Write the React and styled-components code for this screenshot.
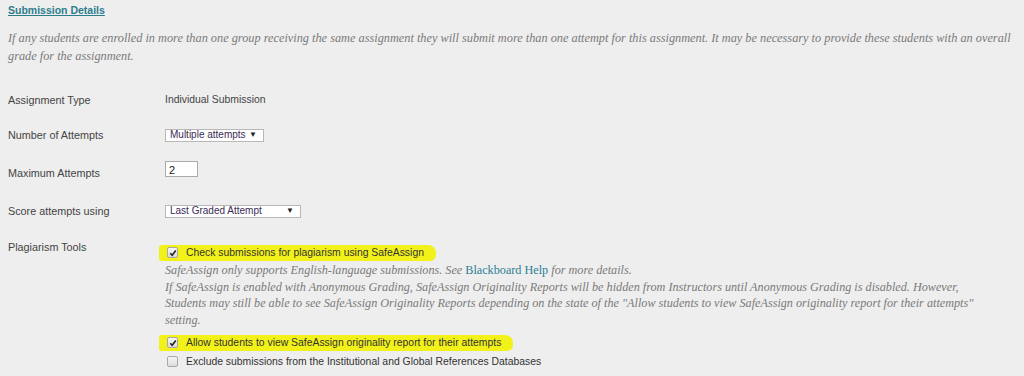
import React from 'react'
import styled, { createGlobalStyle } from 'styled-components'

const GlobalStyle = createGlobalStyle`
  html, body {
    margin: 0;
    padding: 0;
    background: #eeeeee;
  }
  body {
    font-family: "Liberation Sans", Arial, sans-serif;
    font-size: 10.8px;
    color: #444;
  }
`

const Page = styled.div`
  padding: 4px 8px 0 8px;
  width: 1024px;
  box-sizing: border-box;
`

const SectionTitle = styled.a`
  display: inline-block;
  font-weight: bold;
  font-size: 10.5px;
  color: #2c7d8c;
  text-decoration: underline;
`

const Intro = styled.p`
  margin: 13px 0 0 0;
  font-family: "Liberation Serif", "Times New Roman", serif;
  font-style: italic;
  font-size: 12.3px;
  line-height: 18px;
  color: #7a7a7a;
`

const Form = styled.div`
  margin-top: 28px;
  display: grid;
  grid-template-columns: 157px 1fr;
`

const Label = styled.div`
  min-height: ${p => p.h || 37}px;
  line-height: 14px;
`

const Value = styled.div`
  min-height: ${p => p.h || 37}px;
  padding-top: ${p => p.pt || 0}px;
  line-height: 14px;
  font-size: 10.4px;
`

const FakeSelect = styled.div`
  display: inline-flex;
  align-items: center;
  justify-content: space-between;
  box-sizing: border-box;
  width: ${p => p.w}px;
  height: 13px;
  margin-top: 0;
  padding: 0 6px 0 4px;
  background: #fff;
  border: 1px solid #b8b8b8;
  font-size: 10px;
  color: #3b2b55;
`

const Arrow = styled.span`
  font-size: 8px;
  color: #222;
`

const TextInput = styled.div`
  box-sizing: border-box;
  width: 33px;
  height: 16px;
  margin-top: -5px;
  padding: 1px 3px;
  background: #fff;
  border: 1px solid #aaa;
  font-size: 11px;
  color: #222;
`

const CheckRow = styled.div`
  display: flex;
  align-items: center;
  height: ${p => p.h || 19}px;
  margin-left: ${p => (p.mark ? -6 : 0)}px;
`

const Highlight = styled.span`
  display: inline-flex;
  align-items: center;
  gap: 8px;
  padding: ${p => (p.mark ? '1px 12px 1px 8px' : '1px 0 1px 2px')};
  background: ${p => (p.mark ? '#f2f21a' : 'transparent')};
  border-radius: ${p => (p.mark ? '3px 8px 6px 2px' : '0')};
  color: #333;
  font-size: 10.4px;
`

const Box = styled.span`
  display: inline-flex;
  align-items: center;
  justify-content: center;
  width: 9px;
  height: 9px;
  border: 1px solid #a8a8a8;
  border-radius: 2px;
  background: linear-gradient(#f6f6f6, #dcdcdc);
`

const Note = styled.div`
  margin: 0 0 5px 0;
  font-family: "Liberation Serif", "Times New Roman", serif;
  font-style: italic;
  font-size: 12.2px;
  line-height: 16.5px;
  color: #7a7a7a;
`

const HelpLink = styled.a`
  color: #2a7f95;
  font-style: normal;
`

function Check({ checked, mark, children }) {
  return (
    <CheckRow mark={mark}>
      <Highlight mark={mark}>
        <Box>
          {checked && (
            <svg width="8" height="8" viewBox="0 0 8 8">
              <path d="M1.2 4.2 L3.2 6.2 L6.8 1.6" fill="none" stroke="#222" strokeWidth="1.6" />
            </svg>
          )}
        </Box>
        {children}
      </Highlight>
    </CheckRow>
  )
}

export default function App() {
  return (
    <Page>
      <GlobalStyle />
      <SectionTitle>Submission Details</SectionTitle>
      <Intro>
        If any students are enrolled in more than one group receiving the same assignment they will submit more than one attempt for this assignment. It may be necessary to provide these students with an overall grade for the assignment.
      </Intro>
      <Form>
        <Label h={35}>Assignment Type</Label>
        <Value h={35}>Individual Submission</Value>

        <Label h={38}>Number of Attempts</Label>
        <Value h={38}>
          <FakeSelect w={99}>Multiple attempts <Arrow>▼</Arrow></FakeSelect>
        </Value>

        <Label h={38}>Maximum Attempts</Label>
        <Value h={38}>
          <TextInput>2</TextInput>
        </Value>

        <Label h={36}>Score attempts using</Label>
        <Value h={36}>
          <FakeSelect w={136}>Last Graded Attempt <Arrow>▼</Arrow></FakeSelect>
        </Value>

        <Label>Plagiarism Tools</Label>
        <Value pt={3}>
          <Check checked mark>Check submissions for plagiarism using SafeAssign</Check>
          <Note>
            SafeAssign only supports English-language submissions. See <HelpLink>Blackboard Help</HelpLink> for more details.
            <br />
            If SafeAssign is enabled with Anonymous Grading, SafeAssign Originality Reports will be hidden from Instructors until Anonymous Grading is disabled. However,
            <br />
            Students may still be able to see SafeAssign Originality Reports depending on the state of the "Allow students to view SafeAssign originality report for their attempts"
            <br />
            setting.
          </Note>
          <Check checked mark>Allow students to view SafeAssign originality report for their attempts</Check>
          <Check>Exclude submissions from the Institutional and Global References Databases</Check>
        </Value>
      </Form>
    </Page>
  )
}
